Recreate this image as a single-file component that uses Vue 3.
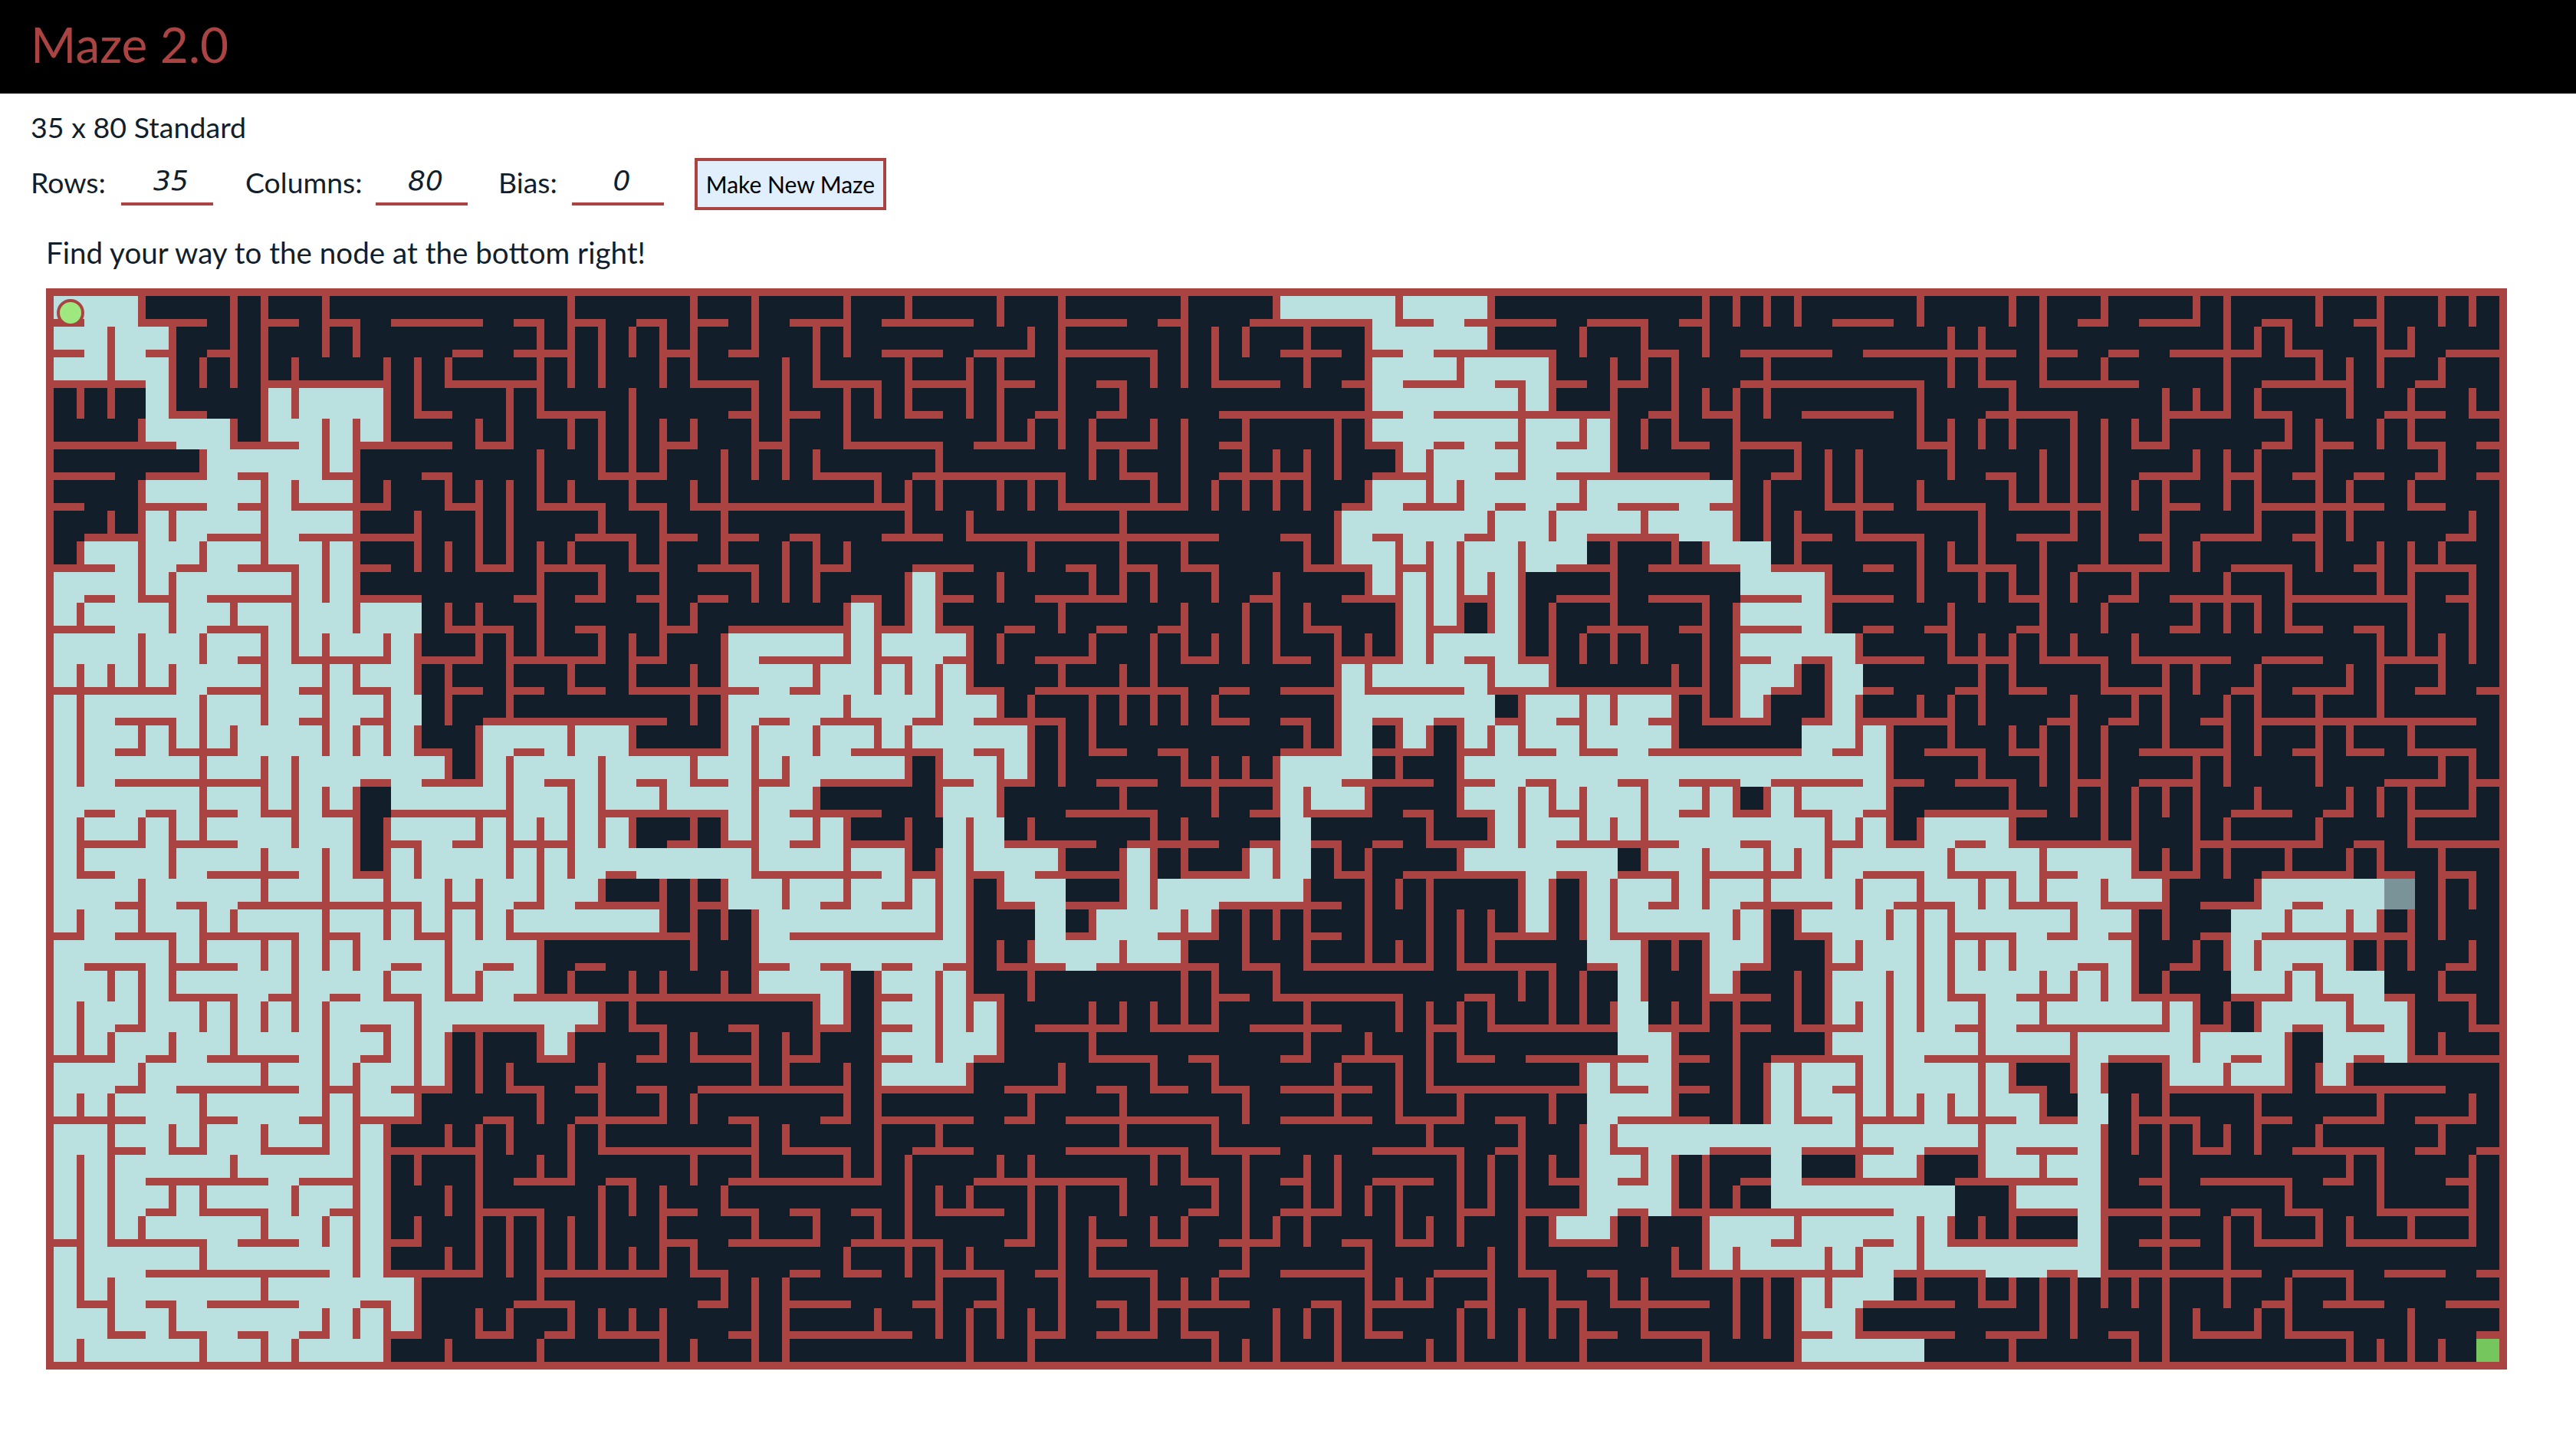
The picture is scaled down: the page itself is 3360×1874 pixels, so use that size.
<script setup>
const ROWS = 35
const COLS = 80

// One entry per row, all as column ranges or lists:
// walked cells | columns taken from the drawn layout | right walls | bottom walls.
const rows = [
  ['0-2 40-46', '0-12 39-59', '2 5 6 8 39 43 46 53 54 55 56', '0 3 4 7 9 11 12 39 40 41 42 44 46 47 48 50 51 53 58 59'],
  ['0-3 43-46', '0-12 39-59', '1 3 5 6 8 9 40 42 46 49 51 53', '0 3 5 40 41 43 45 46 47 48 52 55 56 57 59'],
  ['0-3 43-48', '0-12 39-59', '1 3 4 5 6 7 10 11 12 40 42 45 48 50 51 52 55', '0 1 2 7 8 9 10 39 42 44 45 47 49 51 55 56 57 58 59'],
  ['3 7-10 43-48', '0-12 39-59', '0 1 3 6 7 10 11 42 47 48 50 52 53 54 55', '4 12 39 40 41 42 43 45 46 47 48 49 50 52 54 57 58 59'],
  ['3-5 7-10 43-50', '0-12 39-59', '2 5 6 8 9 10 41 42 47 49 50 51 52 54', '0 1 2 3 6 7 10 11 12 43 45 47 49 53 55 56'],
  ['5-9 44-50', '0-12 39-59', '4 8 9 39 40 41 43 44 47 50 54 56 57 58', '0 1 3 4 6 9 12 39 40 43 44 47 49 50 51 52 53 56'],
  ['3-9 43-54', '0-12 39-59', '2 6 7 9 10 12 39 40 42 44 45 49 54 55 57 58', '0 3 4 6 8 9 10 42 44 45 47 49 51 52 54 58 59'],
  ['3-9 42-54', '0-12 39-59', '1 2 3 6 9 11 41 46 48 51 54 55 56 58', '1 2 5 6 8 9 10 11 40 43 46 50 51 52 57 59'],
  ['1-9 42-49 54-55', '0-12 39-59', '0 2 4 6 8 9 11 12 40 41 43 44 45 47 50 52 53 56', '0 1 4 6 7 10 41 42 44 49 50 52 53 54 56 57 59'],
  ['0-9 28 43-47 55-57', '0-31 39-59', '2 3 7 8 9 15 17 19 22 23 24 27 28 30 39 42 43 44 45 46 47 50 57', '1 3 5 6 7 10 11 15 17 19 21 26 29 39 42 43 46 49 50 52 53 55 56 58 59'],
  ['0-11 26 28 44-45 47 55-57', '0-31 39-59', '0 3 5 7 9 12 13 15 19 20 25 26 27 28 39 40 43 44 45 46 47 48 50 53 54 57', '0 1 5 6 13 14 17 20 22 23 24 25 27 29 31 41 45 50 51 53 55 56 59'],
  ['0-11 22-29 44-47 55-58', '0-31 39-59', '2 4 6 7 8 10 11 13 14 15 17 18 19 21 25 26 29 30 39 41 42 43 44 47 48 49 50 51 53 54 58', '6 8 9 10 12 13 15 16 17 19 23 24 25 27 29 40 42 43 46 48 55 57 59'],
  ['0-11 22-29 42-48 55-56 58', '0-31 39-59', '0 1 2 3 6 8 9 11 12 14 16 18 20 21 24 26 27 28 29 41 42 46 48 52 53 54 56 57', '0 1 2 3 5 6 8 10 13 15 17 19 20 21 22 24 30 40 41 43 44 45 47 48 49 50 51 52 53 56 59'],
  ['0-11 22-30 42-46 48-52 55 58', '0-59', '0 4 6 8 10 12 14 20 21 25 28 30 31 33 34 35 36 37 41 47 49 50 52 53 54 55 57 58', '2 3 8 10 14 15 16 17 18 19 23 25 26 28 30 31 32 38 40 43 45 47 49 52 54 55 57 59'],
  ['0-11 14-18 22-31 42 44 46-52 57-59', '0-59', '0 2 3 4 5 8 9 10 11 13 16 18 21 22 24 26 27 31 32 33 40 41 43 44 45 46 47 49 52 58 59', '2 4 5 12 15 19 20 21 26 27 28 30 34 36 40 41 43 44 46 48 50 52 53 54 55 56 58'],
  ['0-12 14-27 29-31 40-42 46-59', '0-59', '0 4 6 7 12 13 14 17 20 22 23 27 28 30 31 32 36 37 38 39 43 45 59', '2 3 4 5 6 10 12 13 16 19 21 23 25 26 27 29 31 34 35 37 38 39 42 43 44 46 48 51 53 54 56 57 58'],
  ['0-9 11-24 29-30 40-42 46-54 56-59', '0-76', '4 6 7 8 9 14 16 17 19 22 24 28 30 34 37 39 40 42 45 47 48 49 51 53 54 55 56 59 63 65 66 67 68 69 71 74 75 76', '1 3 5 7 9 11 12 13 14 18 19 20 21 24 25 26 33 34 35 39 41 42 44 46 49 53 55 57 59 61 62 63 64 71 72 74'],
  ['0-9 11-18 22-25 29-30 40 47-59 61-63', '0-76', '0 2 3 4 7 9 10 13 14 15 16 17 18 20 21 22 24 25 27 29 31 35 36 44 46 47 49 50 51 57 58 59 60 63 66 67 69 70 73 76', '1 2 4 5 11 13 15 16 20 22 24 26 27 31 32 33 35 36 37 39 41 43 45 46 49 50 51 52 55 58 60 62 64 65 66 67 70 71 72 73 75'],
  ['0-9 11-27 29-32 35 39-40 46-50 52-67', '0-76', '0 3 6 8 9 10 11 14 15 16 22 25 27 28 29 32 34 35 36 38 39 41 42 45 51 53 55 56 57 61 64 67 68 69 70 72 74 75', '1 5 6 7 10 18 23 24 25 26 28 30 32 33 34 37 38 42 44 45 46 47 49 51 52 54 55 56 59 60 62 63 65 68 69 72 73 74 76'],
  ['0-17 22-29 31-32 35-40 48 50-68 72-76', '0-76', '2 6 8 10 12 13 15 17 19 20 21 23 25 27 28 29 30 34 35 40 42 43 44 47 48 49 50 52 53 55 58 60 62 63 64 66 68 71', '2 4 6 7 8 9 10 11 13 15 17 18 19 21 25 27 31 33 34 38 39 40 41 52 55 56 57 60 61 64 65 67 68 70 71 73'],
  ['0-19 23-29 32 34-37 48 50-55 57-67 71-75', '0-76', '0 2 4 5 8 10 11 12 13 14 19 20 21 22 28 29 33 36 37 38 39 40 42 44 45 46 47 48 49 50 54 55 56 59 60 61 65 67 68 72 74 75 76', '0 2 3 5 6 7 9 12 15 16 17 18 19 20 24 25 26 27 28 33 36 37 41 47 48 51 52 53 57 62 63 65 67 70 72 73 74 75 76'],
  ['0-15 23-29 32-36 50-51 54-55 58-67 71-74', '0-76', '3 4 6 7 8 9 12 15 20 22 29 30 31 34 36 38 40 42 43 44 45 46 51 52 53 55 57 58 60 61 62 63 67 69 70 71 74 75 76', '1 2 4 5 11 14 17 23 25 27 29 31 32 34 35 36 37 39 41 42 43 44 46 47 48 50 55 58 66 69 73'],
  ['0-15 23-25 27-29 51 54 58-67 71-75', '0-76', '1 2 3 7 10 12 13 15 16 18 19 21 22 25 26 28 29 31 36 37 39 47 48 49 51 53 54 56 57 59 60 61 64 65 66 67 68 72 73', '4 5 7 9 11 13 15 16 17 18 19 20 21 22 23 24 27 30 38 40 41 42 43 46 54 55 62 64 65 68 69 71 72 74 76'],
  ['0-17 25 27-30 51 58-69 72-76', '0-31 39-76', '0 2 4 5 6 7 8 11 17 18 24 25 26 28 29 30 40 43 44 45 46 48 49 50 52 53 54 56 57 58 59 60 62 64 68 69 70 71 74 76', '2 10 13 14 15 17 19 22 25 27 39 40 41 45 47 48 49 50 52 53 55 57 58 62 64 65 66 67 68 70 73 75'],
  ['0-12 16 27-30 51-52 58-72 74-76', '0-31 39-76', '0 1 3 5 8 10 11 12 13 15 16 19 20 22 23 24 26 28 30 40 42 44 45 52 54 57 59 62 65 69 72 76', '0 1 3 5 6 7 10 16 19 21 22 24 27 30 40 42 43 46 48 49 50 51 53 56 57 58 61 62 63 64 65 67 68 71 75'],
  ['0-12 27-29 50-52 56-63 66 69-72 74', '0-31 39-76', '2 6 8 9 11 12 13 14 17 22 23 25 26 29 41 43 44 49 50 52 54 55 56 58 59 62 63 65 66 68 70 72 73 74', '2 4 5 6 7 9 11 12 15 17 19 21 22 23 24 25 27 28 29 31 40 41 42 45 46 47 48 49 51 53 58 64 69 70 71 72 74 75 76'],
  ['0-11 50-52 56-64 66', '0-12 39-76', '0 1 4 8 9 11 41 43 45 48 52 54 55 56 58 59 60 61 62 64 67 68 71 75', '0 1 2 5 8 10 11 40 41 42 44 45 47 51 52 53 57 59 60 62 63 65 68 69 72 74 75'],
  ['0-10 50-66', '0-12 39-76', '1 3 4 6 8 9 10 12 44 47 49 50 58 62 66 67 68 69 70 71 73', '2 4 7 8 11 12 39 43 44 45 47 51 54 55 57 58 59 61 62 64 65 70 73 74 75'],
  ['0-10 50-52 56 59-60 63-66', '0-12 39-76', '0 1 5 9 10 11 40 41 45 46 47 48 49 51 52 53 58 60 62 64 66 68 74 75', '3 4 5 6 8 9 40 43 44 49 51 55 57 58 59 60 62 63 64 65 68 70 71 72 74'],
  ['0-10 50-52 56-61 64-66', '0-12 39-76', '0 1 3 4 7 9 10 12 40 41 42 43 45 46 47 49 52 53 54 63 66 68 72 75', '3 5 6 9 40 41 46 48 49 51 53 54 55 56 57 58 59 64 65 67 68 69 71 73 76'],
  ['0-10 49-50 54-61 66', '0-12 39-76', '0 1 2 6 8 9 10 11 39 40 43 44 45 47 48 50 51 53 56 60 61 62 63 66 68 70 71 73 74 76', '0 2 3 4 6 7 11 39 42 44 49 50 56 59 62 63 64 65 68 69 72 73 75 76'],
  ['0-10 54-66', '0-12 39-76', '0 4 9 10 12 42 46 47 52 53 54 57 58 60 66 68 70', '3 4 5 6 7 8 11 12 40 41 42 45 46 48 50 53 54 55 56 57 58 60 61 62 65 67 68 69 70 71 73 74 76'],
  ['0-11 57-59', '0-12 39-59', '0 1 6 11 42 43 44 46 48 50 51 54 55 56 57', '1 3 5 6 7 10 41 43 44 46 49 51 52 53 59'],
  ['0-11 57-58', '0-12 39-59', '1 3 8 9 10 11 39 40 41 42 45 46 47 48 49 51 54 55 56 58', '2 4 6 8 11 43 50 52 53 57 59'],
  ['0-10 57-60', '0-12 39-59', '0 4 6 7 10 12 39 41 44 45 47 49 53 56', '0-79']
]

function inList(list, col) {
  return list.split(' ').some((range) => {
    const [from, to = from] = range.split('-').map(Number)
    return col >= from && col <= to
  })
}

function random(seed) {
  let s = seed
  return () => {
    s = (s + 0x6d2b79f5) | 0
    let t = Math.imul(s ^ (s >>> 15), 1 | s)
    t = (t + Math.imul(t ^ (t >>> 7), 61 | t)) ^ t
    return ((t ^ (t >>> 14)) >>> 0) / 4294967296
  }
}

// Randomised Kruskal fills the columns the layout table does not list.
function carve() {
  const rand = random(20240)
  const parent = Array.from({ length: ROWS * COLS }, (_, i) => i)
  const find = (i) => {
    while (parent[i] !== i) {
      parent[i] = parent[parent[i]]
      i = parent[i]
    }
    return i
  }
  const right = new Set()
  const down = new Set()
  const edges = []
  for (let i = 0; i < ROWS * COLS; i++) {
    if (i % COLS < COLS - 1) edges.push([i, i + 1, right])
    if (i + COLS < ROWS * COLS) edges.push([i, i + COLS, down])
  }
  for (let i = edges.length - 1; i > 0; i--) {
    const j = Math.floor(rand() * (i + 1))
    ;[edges[i], edges[j]] = [edges[j], edges[i]]
  }
  for (const [a, b, open] of edges) {
    const ra = find(a)
    const rb = find(b)
    if (ra !== rb) {
      parent[ra] = rb
      open.add(a)
    }
  }
  return { right, down }
}

function buildMaze() {
  const { right, down } = carve()
  const cells = []
  for (let r = 0; r < ROWS; r++) {
    const [walked, known, rightWalls, bottomWalls] = rows[r]
    for (let c = 0; c < COLS; c++) {
      const i = r * COLS + c
      const listed = inList(known, c)
      cells.push({
        id: i,
        wallRight: c === COLS - 1 || (listed ? inList(rightWalls, c) : !right.has(i)),
        wallBottom: r === ROWS - 1 || (listed ? inList(bottomWalls, c) : !down.has(i)),
        walked: inList(walked, c),
        player: r === 19 && c === 76,
        start: r === 0 && c === 0,
        goal: r === ROWS - 1 && c === COLS - 1
      })
    }
  }
  return cells
}

const cells = buildMaze()
const fields = [
  { label: 'Rows:', value: '35' },
  { label: 'Columns:', value: '80' },
  { label: 'Bias:', value: '0' }
]
</script>

<template>
  <div class="page">
    <header class="topbar">
      <h1 class="title">Maze 2.0</h1>
    </header>
    <section class="controls">
      <p class="summary">35 x 80 Standard</p>
      <form class="form" @submit.prevent>
        <label v-for="field in fields" :key="field.label" class="field">
          <span class="caption">{{ field.label }}</span>
          <input class="number" :value="field.value" />
        </label>
        <button class="make" type="button">Make New Maze</button>
      </form>
    </section>
    <main class="board">
      <p class="hint">Find your way to the node at the bottom right!</p>
      <div class="maze">
        <div
          v-for="cell in cells"
          :key="cell.id"
          class="cell"
          :class="{
            'wall-right': cell.wallRight,
            'wall-bottom': cell.wallBottom,
            walked: cell.walked,
            player: cell.player,
            goal: cell.goal
          }"
        >
          <span v-if="cell.start" class="start"></span>
        </div>
      </div>
    </main>
  </div>
</template>

<style scoped>
.page {
  font-family: Lato, "Noto Sans", sans-serif;
  color: #121f2b;
}
.topbar {
  height: 122px;
  box-sizing: border-box;
  background: #000;
  display: flex;
  align-items: center;
  padding: 0 0 6px 40px;
}
.title {
  margin: 0;
  font-size: 64px;
  font-weight: 400;
  color: #a94442;
  line-height: 1;
}
.controls {
  padding: 0 40px;
}
.summary {
  margin: 0;
  padding-top: 22px;
  font-size: 37.6px;
  line-height: 44px;
}
.form {
  display: flex;
  align-items: flex-start;
  margin-top: 18px;
  height: 68px;
}
.field {
  display: flex;
  align-items: center;
  font-size: 37.4px;
  margin-right: 40px;
  height: 62px;
}
.field:first-child {
  margin-right: 42px;
}
.caption {
  width: 170px;
}
.field:first-child .caption {
  width: 118px;
}
.field:nth-child(3) .caption {
  width: 96px;
}
.number {
  width: 120px;
  height: 62px;
  box-sizing: border-box;
  border: 0;
  border-bottom: 4px solid #a94442;
  background: transparent;
  text-align: center;
  font: italic 36px "DejaVu Sans", sans-serif;
  color: #121f2b;
  padding: 0 0 0 10px;
  outline: none;
}
.make {
  width: 250px;
  height: 68px;
  box-sizing: border-box;
  border: 4px solid #a94442;
  background: #e1eefb;
  font: 30px Lato, sans-serif;
  color: #000;
  padding: 0;
}
.board {
  padding-left: 60px;
}
.hint {
  margin: 0;
  padding: 33px 0 25px;
  font-size: 38.6px;
  line-height: 44px;
}
.maze {
  display: grid;
  grid-template-columns: repeat(80, 40px);
  grid-auto-rows: 40px;
  width: max-content;
  border-left: 10px solid #a94442;
  border-top: 10px solid #a94442;
}
.cell {
  box-sizing: border-box;
  background: #121f2b;
  position: relative;
}
.cell.walked {
  background: #bae0df;
}
.cell.player {
  background: #7a9398;
}
.cell.goal {
  background: #75c65c;
}
.wall-right {
  border-right: 10px solid #a94442;
}
.wall-bottom {
  border-bottom: 10px solid #a94442;
}
.start {
  position: absolute;
  left: 4px;
  top: 4px;
  width: 36px;
  height: 36px;
  box-sizing: border-box;
  border: 4px solid #a94442;
  border-radius: 50%;
  background: #9fe880;
}
</style>
